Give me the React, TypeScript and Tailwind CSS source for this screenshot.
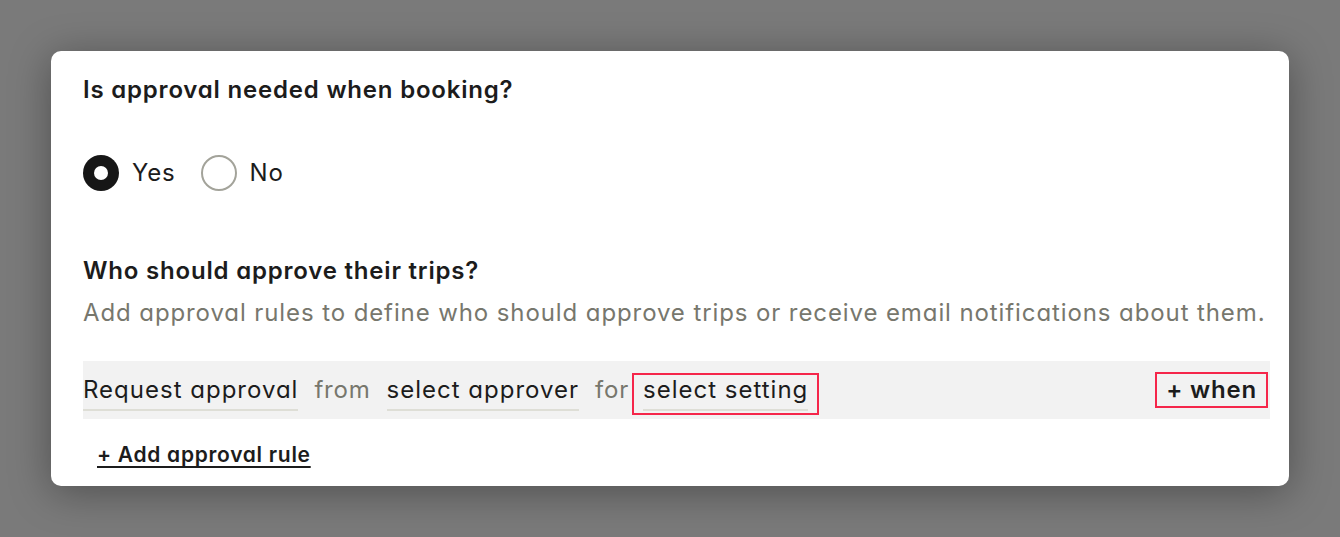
import React from "react";

const font = "font-['Inter','Liberation_Sans',sans-serif] [font-feature-settings:'cv11']";

function Radio({ checked, label }: { checked: boolean; label: string }) {
  return (
    <label className="flex items-center gap-[13px]">
      {checked ? (
        <span className="flex h-[36px] w-[36px] items-center justify-center rounded-full bg-[#161616]">
          <span className="h-[14px] w-[14px] rounded-full bg-white" />
        </span>
      ) : (
        <span className="h-[36px] w-[36px] rounded-full border-2 border-[#a3a39a] bg-white" />
      )}
      <span className="text-[24px] leading-[28px] tracking-[0.8px] text-[#1c1c1c]">{label}</span>
    </label>
  );
}

function Picker({ children, className = "pt-[7px] pb-[5px]" }: { children: React.ReactNode; className?: string }) {
  return (
    <span
      className={`border-b-2 border-[#deded6] text-[24px] leading-[28px] tracking-[1px] text-[#1c1c1c] ${className}`}
    >
      {children}
    </span>
  );
}

export default function App() {
  return (
    <div className={`h-[537px] w-[1340px] overflow-hidden bg-[#7a7a7a] px-[51px] pt-[51px] ${font}`}>
      <div className="h-[435px] w-[1238px] rounded-[10px] bg-white pl-8 pr-[19px] pt-[25px] shadow-[0_6px_40px_rgba(0,0,0,0.35)]">
        <h2 className="text-[24px] font-semibold leading-[28px] tracking-[0.8px] text-[#1c1c1c]">
          Is approval needed when booking?
        </h2>

        <div className="mt-[51px] flex items-center gap-[25px]">
          <Radio checked label="Yes" />
          <Radio checked={false} label="No" />
        </div>

        <h3 className="mt-[66px] text-[24px] font-semibold leading-[28px] tracking-[0.8px] text-[#1c1c1c]">
          Who should approve their trips?
        </h3>
        <p className="mt-[14px] text-[24px] leading-[28px] tracking-[0.9px] text-[#77776d]">
          Add approval rules to define who should approve trips or receive email notifications about them.
        </p>

        {/* rule row */}
        <div className="mt-[34px] flex h-[58px] items-center bg-[#f2f2f2]">
          <div className="flex items-center gap-[16px]">
            <Picker>Request approval</Picker>
            <span className="text-[24px] leading-[28px] tracking-[0.8px] text-[#77776d]">from</span>
            <Picker>select approver</Picker>
            <span className="text-[24px] leading-[28px] tracking-[0.8px] text-[#77776d]">for</span>
            <span className="-ml-[13px] mt-[8px] flex h-[42px] items-end border-2 border-[#f5264a] px-[9px] pb-[2px]">
              <Picker className="pb-[5px]">select setting</Picker>
            </span>
          </div>
          <span className="ml-auto mr-[2px] flex h-[36px] items-center border-2 border-[#f5264a] px-[9px] text-[24px] font-semibold leading-[28px] tracking-[0.8px] text-[#1c1c1c]">
            + when
          </span>
        </div>

        <button
          type="button"
          className="ml-[14px] mt-[22px] text-[21px] font-semibold leading-[28px] tracking-[0.7px] text-[#1c1c1c] underline decoration-2 underline-offset-[4px]"
        >
          + Add approval rule
        </button>
      </div>
    </div>
  );
}
